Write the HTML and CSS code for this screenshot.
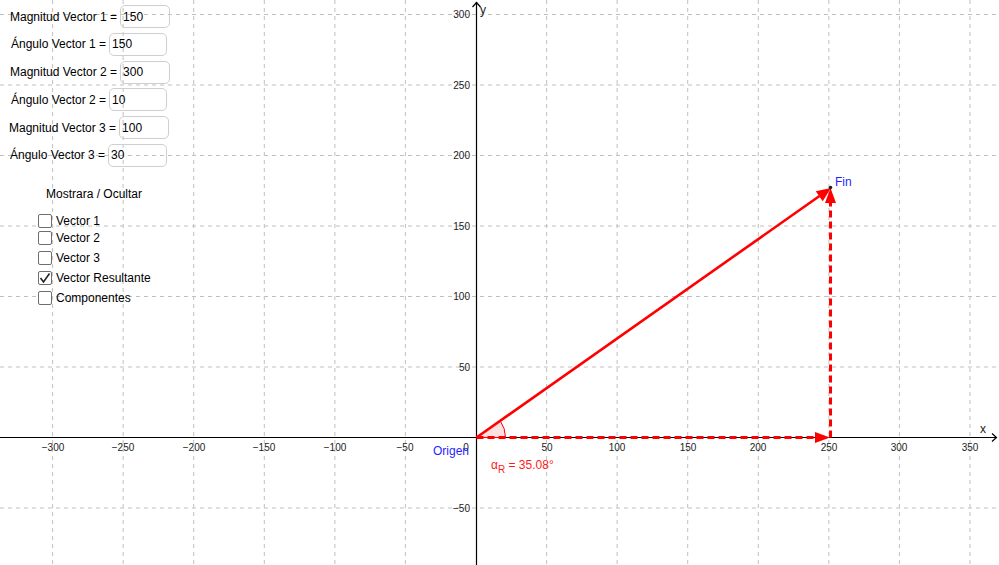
FILE: index.html
```html
<!DOCTYPE html>
<html lang="es">
<head>
<meta charset="utf-8">
<title>Vectores</title>
<link rel="stylesheet" href="styles.css">
</head>
<body>
<div class="app">
  <svg class="graph" width="999" height="565" viewBox="0 0 999 565" xmlns="http://www.w3.org/2000/svg">
    <g class="grid">
      <line x1="52.6" y1="0" x2="52.6" y2="565"/>
      <line x1="123.1" y1="0" x2="123.1" y2="565"/>
      <line x1="193.7" y1="0" x2="193.7" y2="565"/>
      <line x1="264.3" y1="0" x2="264.3" y2="565"/>
      <line x1="334.9" y1="0" x2="334.9" y2="565"/>
      <line x1="405.4" y1="0" x2="405.4" y2="565"/>
      <line x1="546.6" y1="0" x2="546.6" y2="565"/>
      <line x1="617.1" y1="0" x2="617.1" y2="565"/>
      <line x1="687.7" y1="0" x2="687.7" y2="565"/>
      <line x1="758.3" y1="0" x2="758.3" y2="565"/>
      <line x1="828.9" y1="0" x2="828.9" y2="565"/>
      <line x1="899.4" y1="0" x2="899.4" y2="565"/>
      <line x1="970" y1="0" x2="970" y2="565"/>
      <line x1="0" y1="14.5" x2="999" y2="14.5"/>
      <line x1="0" y1="85" x2="999" y2="85"/>
      <line x1="0" y1="155.5" x2="999" y2="155.5"/>
      <line x1="0" y1="226" x2="999" y2="226"/>
      <line x1="0" y1="296.5" x2="999" y2="296.5"/>
      <line x1="0" y1="367" x2="999" y2="367"/>
      <line x1="0" y1="508" x2="999" y2="508"/>
    </g>
    <g class="axes">
      <line x1="0" y1="437.5" x2="997" y2="437.5"/>
      <line x1="476.5" y1="565" x2="476.5" y2="2"/>
      <polyline points="992,433.5 996.5,437.5 992,441.5"/>
      <polyline points="472.5,7 476.5,2.5 480.5,7"/>
    </g>
    <g class="ticks">
      <text x="53" y="451" text-anchor="middle">−300</text>
      <text x="123" y="451" text-anchor="middle">−250</text>
      <text x="194" y="451" text-anchor="middle">−200</text>
      <text x="264" y="451" text-anchor="middle">−150</text>
      <text x="335" y="451" text-anchor="middle">−100</text>
      <text x="405" y="451" text-anchor="middle">−50</text>
      <text x="466" y="451" text-anchor="middle">0</text>
      <text x="547" y="451" text-anchor="middle">50</text>
      <text x="617" y="451" text-anchor="middle">100</text>
      <text x="688" y="451" text-anchor="middle">150</text>
      <text x="758" y="451" text-anchor="middle">200</text>
      <text x="829" y="451" text-anchor="middle">250</text>
      <text x="899" y="451" text-anchor="middle">300</text>
      <text x="970" y="451" text-anchor="middle">350</text>
      <text x="470" y="18" text-anchor="end">300</text>
      <text x="470" y="88.5" text-anchor="end">250</text>
      <text x="470" y="159" text-anchor="end">200</text>
      <text x="470" y="229.5" text-anchor="end">150</text>
      <text x="470" y="300" text-anchor="end">100</text>
      <text x="470" y="370.5" text-anchor="end">50</text>
      <text x="470" y="511.5" text-anchor="end">−50</text>
      <text x="480" y="14" class="axis-name">y</text>
      <text x="980" y="433" class="axis-name">x</text>
    </g>
    <path class="angle" d="M476.5,437.5 L505.5,437.5 A29,29 0 0 0 500.2,420.8 Z"/>
    <g class="comp">
      <line x1="476.5" y1="437.5" x2="816" y2="437.5"/>
      <line x1="830.5" y1="437.5" x2="830.5" y2="202"/>
    </g>
    <polygon class="head" points="830,437.5 815,432 815,443"/>
    <polygon class="head" points="830.5,188 825,203 836,203"/>
    <line class="res" x1="476.5" y1="437.5" x2="819.5" y2="196"/>
    <polygon class="head" points="831,188 822.7,201.2 815.8,191.3"/>
    <circle cx="830.5" cy="187.5" r="1.8" fill="#222"/>
    <text x="835" y="186" class="blue">Fin</text>
    <text x="433" y="455" class="blue">Origen</text>
    <text x="491" y="469" class="red">α<tspan dy="4" font-size="10">R</tspan><tspan dy="-4"> = 35.08°</tspan></text>
  </svg>

  <div class="panel">
    <div class="fields">
      <div class="row r1"><span>Magnitud Vector 1 =</span><span class="box w50">150</span></div>
      <div class="row r2"><span>Ángulo Vector 1 =</span><span class="box w58">150</span></div>
      <div class="row r3"><span>Magnitud Vector 2 =</span><span class="box w50">300</span></div>
      <div class="row r4"><span>Ángulo Vector 2 =</span><span class="box w58">10</span></div>
      <div class="row r5"><span>Magnitud Vector 3 =</span><span class="box w50">100</span></div>
      <div class="row r6"><span>Ángulo Vector 3 =</span><span class="box w59">30</span></div>
    </div>
    <div class="title">Mostrara / Ocultar</div>
    <div class="checks">
      <div class="check c1"><span class="cb"></span><span>Vector 1</span></div>
      <div class="check c2"><span class="cb"></span><span>Vector 2</span></div>
      <div class="check c3"><span class="cb"></span><span>Vector 3</span></div>
      <div class="check c4"><span class="cb"><svg width="14" height="14" viewBox="0 0 14 14"><polyline points="2.5,7 5.5,11 11.5,2.5" fill="none" stroke="#222" stroke-width="1.6"/></svg></span><span>Vector Resultante</span></div>
      <div class="check c5"><span class="cb"></span><span>Componentes</span></div>
    </div>
  </div>
</div>
</body>
</html>
```

FILE: styles.css
```css
html, body {
  margin: 0;
  padding: 0;
  background: #fff;
}
.app {
  position: relative;
  width: 999px;
  height: 565px;
  overflow: hidden;
  font-family: "Liberation Sans", Arial, sans-serif;
  font-size: 12px;
  color: #000;
}
.graph {
  position: absolute;
  left: 0;
  top: 0;
}
.grid line {
  stroke: #c0c0c0;
  stroke-width: 1;
  stroke-dasharray: 4 4;
}
.axes line, .axes polyline {
  stroke: #000;
  stroke-width: 1.2;
  fill: none;
}
.ticks text {
  font-family: "Liberation Sans", Arial, sans-serif;
  font-size: 10px;
  fill: #222;
}
.ticks .axis-name {
  font-size: 12px;
}
.angle {
  fill: rgba(255, 0, 0, 0.12);
  stroke: #ff0000;
  stroke-width: 1;
}
.comp line {
  stroke: #ff0000;
  stroke-width: 3;
  stroke-dasharray: 7 4;
}
.res {
  stroke: #ff0000;
  stroke-width: 2.6;
}
.head {
  fill: #ff0000;
}
.blue {
  font-family: "Liberation Sans", Arial, sans-serif;
  font-size: 12px;
  fill: #1f1fff;
}
.red {
  font-family: "Liberation Sans", Arial, sans-serif;
  font-size: 12px;
  fill: #ff1a1a;
}
.panel {
  position: relative;
  display: flex;
  flex-direction: column;
  padding-top: 5px;
}
.fields {
  display: flex;
  flex-direction: column;
  gap: 4.8px;
}
.row {
  display: flex;
  align-items: center;
  gap: 3px;
  height: 23px;
}
.r1, .r3 { margin-left: 10px; }
.r2, .r4 { margin-left: 11px; }
.r5 { margin-left: 9px; }
.r6 { margin-left: 10px; }
.box {
  box-sizing: border-box;
  height: 23px;
  border: 1px solid #cfcfcf;
  border-radius: 5px;
  padding-left: 2px;
  display: flex;
  align-items: center;
  background: transparent;
}
.w50 { width: 50px; }
.w58 { width: 58px; }
.w59 { width: 59px; }
.title {
  margin-top: 20px;
  margin-left: 46px;
  line-height: 14px;
}
.checks {
  display: flex;
  flex-direction: column;
  margin-top: 13px;
  margin-left: 38px;
  gap: 5.8px;
}
.check {
  display: flex;
  align-items: center;
  gap: 4px;
  height: 14px;
}
.cb {
  box-sizing: border-box;
  width: 14px;
  height: 14px;
  border: 1px solid #6e6e6e;
  border-radius: 2px;
  display: flex;
  background: #fff;
}
.cb svg {
  display: block;
  margin: -1px;
}
.c2 { margin-top: -2.6px; }
```
